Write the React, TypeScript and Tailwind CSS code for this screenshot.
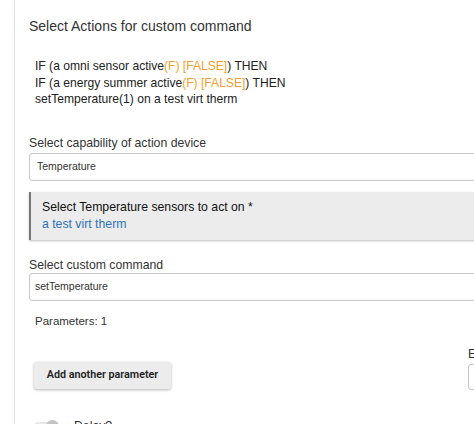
export default function App() {
  return (
    <div className="w-[474px] h-[424px] overflow-hidden bg-white relative" style={{ fontFamily: '"Liberation Sans", Arial, sans-serif' }}>
      <div className="ml-[14px] w-[700px] min-h-[424px] border-l border-[#e6e6e6] pl-[14px] shadow-[-1px_0_2px_rgba(0,0,0,0.04)]">
        <div className="pt-[16px] h-[36px] leading-[20px] text-[14px] text-[#333]">Select Actions for custom command</div>

        <div className="mt-[22px] pl-[6px] text-[12.1px] leading-[16.5px] text-[#222]">
          <div>
            IF (a omni sensor active<span className="text-[#f0a030]">(F) [FALSE]</span>) THEN
          </div>
          <div>
            IF (a energy summer active<span className="text-[#f0a030]">(F) [FALSE]</span>) THEN
          </div>
          <div>setTemperature(1) on a test virt therm</div>
        </div>

        <div className="mt-[26px] h-[18px] leading-[18px] text-[12.25px] text-[#333]">Select capability of action device</div>
        <div className="mt-[1px] h-[28px] w-[660px] rounded-[3px] border border-[#c8c8c8] bg-white px-[7px] flex items-center text-[10.5px] text-[#333]">
          Temperature
        </div>

        <div className="mt-[11px] h-[48px] w-[660px] border-l-2 border-[#777] bg-[#ececec] pl-[11px] pt-[7px] shadow-[0_1px_2px_rgba(0,0,0,0.25)] text-[12.25px] leading-[17px]">
          <div className="text-[#111]">Select Temperature sensors to act on *</div>
          <div className="text-[#2f73b8]">a test virt therm</div>
        </div>

        <div className="mt-[16px] h-[17px] leading-[18px] text-[12.25px] text-[#333]">Select custom command</div>
        <div className="h-[28px] w-[660px] rounded-[3px] border border-[#c8c8c8] bg-white px-[5px] flex items-center text-[10.5px] text-[#333]">
          setTemperature
        </div>

        <div className="mt-[11px] pl-[6px] h-[18px] leading-[18px] text-[11.5px] text-[#333]">Parameters: 1</div>

        <div className="mt-[16px] flex items-end">
          <button className="ml-[5px] mb-[1px] h-[27px] w-[137px] rounded-[3px] bg-[#ececec] text-[10.75px] font-semibold text-[#222] shadow-[0_1px_3px_rgba(0,0,0,0.3)]" style={{ fontFamily: 'Roboto, sans-serif' }}>
            Add another parameter
          </button>
          <div className="ml-[297px] flex flex-col">
            <div className="h-[16px] leading-[16px] text-[12.25px] text-[#333]">E</div>
            <div className="mt-[2px] h-[26px] w-[120px] rounded-[3px] border border-[#c8c8c8] bg-white" />
          </div>
        </div>

        <div className="mt-[27px] ml-[5px] flex items-center gap-[14px]">
          <div className="relative h-[14px] w-[26px]">
            <div className="absolute left-0 top-[3px] h-[9px] w-[24px] rounded-full bg-[#e8e8e8]" />
            <div className="absolute left-[12px] top-[1px] h-[13px] w-[13px] rounded-full bg-[#c4c4c4] shadow" />
          </div>
          <div className="text-[12.25px] text-[#333] leading-[18px]">Delay?</div>
        </div>
      </div>
    </div>
  );
}
